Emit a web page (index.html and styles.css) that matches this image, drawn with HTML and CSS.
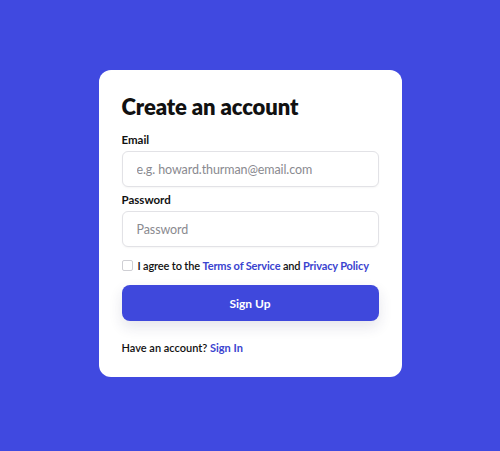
FILE: index.html
```html
<!DOCTYPE html>
<html lang="en">
<head>
  <meta charset="UTF-8" />
  <meta name="viewport" content="width=device-width, initial-scale=1.0"/>
  <title>Create an account</title>
  <link rel="stylesheet" href="styles.css">
</head>
<body>
  <div class="card">
    <h1>Create an account</h1>

    <form class="signup-form">
      <label class="field">
        <span class="field-label">Email</span>
        <input type="email" placeholder="e.g. howard.thurman@email.com">
      </label>

      <label class="field">
        <span class="field-label">Password</span>
        <input type="password" placeholder="Password">
      </label>

      <label class="agree">
        <input type="checkbox">
        <span>I agree to the <a href="#">Terms of Service</a> and <a href="#">Privacy Policy</a></span>
      </label>

      <button type="submit">Sign Up</button>
    </form>

    <p class="signin">Have an account? <a href="#">Sign In</a></p>
  </div>
</body>
</html>
```

FILE: styles.css
```css
:root {
  --bg: #4049e0;
  --card-bg: #ffffff;
  --border: #e2e2e6;
  --text: #111111;
  --placeholder: #8a8a90;
  --accent: #3f48dc;
  --link: #3a43cf;
}

* {
  margin: 0;
  padding: 0;
  box-sizing: border-box;
}

body {
  background: var(--bg);
  color: var(--text);
  font-family: Lato, "Noto Sans", sans-serif;
  min-height: 100vh;
  display: flex;
  align-items: flex-start;
  justify-content: center;
  padding-top: 70px;
}

.card {
  width: 303px;
  background: var(--card-bg);
  border-radius: 12px;
  padding: 22px 23px 22px;
}

h1 {
  font-size: 22px;
  font-weight: 800;
  line-height: 30px;
  letter-spacing: -0.1px;
  margin-bottom: 11px;
}

.signup-form {
  display: flex;
  flex-direction: column;
}

.field {
  display: flex;
  flex-direction: column;
  margin-bottom: 6px;
}

.field-label {
  font-size: 11.5px;
  font-weight: 700;
  line-height: 14px;
  margin-bottom: 4px;
}

input[type="email"],
input[type="password"] {
  height: 36px;
  border: 1px solid var(--border);
  border-radius: 6px;
  padding: 0 14px;
  font-family: inherit;
  font-size: 12.5px;
  letter-spacing: -0.1px;
  color: var(--text);
  box-shadow: 0 1px 2px rgba(0, 0, 0, 0.04);
}

input::placeholder {
  color: var(--placeholder);
}

.agree {
  display: flex;
  align-items: center;
  gap: 5px;
  font-size: 11px;
  font-weight: 600;
  letter-spacing: -0.15px;
  white-space: nowrap;
  margin: 6px 0 13px;
}

.agree input {
  appearance: none;
  width: 11px;
  height: 11px;
  border: 1px solid #cfcfd4;
  border-radius: 2px;
  margin: 0;
}

a {
  color: var(--link);
  font-weight: 700;
  text-decoration: none;
}

button {
  height: 36px;
  background: var(--accent);
  color: #ffffff;
  border: none;
  border-radius: 8px;
  font-family: inherit;
  font-size: 12px;
  font-weight: 700;
  cursor: pointer;
  box-shadow: 0 6px 14px rgba(40, 40, 90, 0.12);
}

.signin {
  font-size: 11px;
  font-weight: 600;
  margin-top: 20px;
  line-height: 14px;
}
```
